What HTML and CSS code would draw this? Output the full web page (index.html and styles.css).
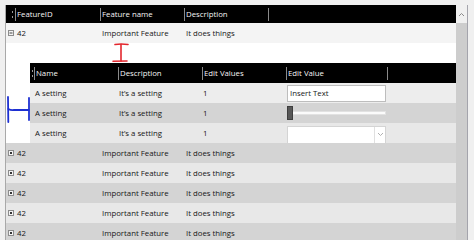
FILE: index.html
```html
<!DOCTYPE html>
<html>
<head>
<meta charset="utf-8">
<link rel="stylesheet" href="styles.css">
</head>
<body>
<div class="window">
  <div class="grid">
    <div class="main">
      <div class="hdr outer-cols">
        <div class="hc grip"><span class="dots"></span></div>
        <div class="hc"><span class="lbl">FeatureID</span></div>
        <div class="hc"><span class="lbl">Feature name</span></div>
        <div class="hc"><span class="lbl">Description</span></div>
        <div class="hc"><span class="lbl"></span></div>
      </div>
      <div class="row outer-cols top">
        <div class="c exp"><svg width="6" height="6" viewBox="0 0 6 6"><rect x="0.5" y="0.5" width="5" height="5" fill="#f4f4f4" stroke="#8c8c8c"/><line x1="1.5" y1="3" x2="4.5" y2="3" stroke="#444"/></svg></div>
        <div class="c">42</div>
        <div class="c">Important Feature</div>
        <div class="c">It does things</div>
        <div class="c"></div>
      </div>
      <div class="detail">
        <div class="nested">
          <div class="hdr nested-cols">
            <div class="hc grip n"><span class="dots"></span></div>
            <div class="hc"><span class="lbl">Name</span></div>
            <div class="hc"><span class="lbl">Description</span></div>
            <div class="hc"><span class="lbl">Edit Values</span></div>
            <div class="hc"><span class="lbl">Edit Value</span></div>
            <div class="hc"><span class="lbl"></span></div>
          </div>
          <div class="row nested-cols light1">
            <div class="c"></div>
            <div class="c">A setting</div>
            <div class="c">It’s a setting</div>
            <div class="c">1</div>
            <div class="c ctl"><div class="textbox">Insert Text</div></div>
            <div class="c"></div>
          </div>
          <div class="row nested-cols dark">
            <div class="c"></div>
            <div class="c">A setting</div>
            <div class="c">It’s a setting</div>
            <div class="c">1</div>
            <div class="c ctl"><div class="slider"><span class="thumb"></span><span class="track"></span></div></div>
            <div class="c"></div>
          </div>
          <div class="row nested-cols light">
            <div class="c"></div>
            <div class="c">A setting</div>
            <div class="c">It’s a setting</div>
            <div class="c">1</div>
            <div class="c ctl"><div class="combo"><span class="combo-field"></span><span class="combo-btn"><svg width="7" height="5" viewBox="0 0 7 5"><polyline points="1,1 3.5,3.5 6,1" fill="none" stroke="#b0b0b0" stroke-width="1"/></svg></span></div></div>
            <div class="c"></div>
          </div>
        </div>
      </div>
      <div class="row outer-cols dark">
        <div class="c exp"><svg width="6" height="6" viewBox="0 0 6 6"><rect x="0.5" y="0.5" width="5" height="5" fill="#f4f4f4" stroke="#8c8c8c"/><rect x="2" y="2" width="2" height="2" fill="#333"/></svg></div>
        <div class="c">42</div>
        <div class="c">Important Feature</div>
        <div class="c">It does things</div>
        <div class="c"></div>
      </div>
      <div class="row outer-cols light">
        <div class="c exp"><svg width="6" height="6" viewBox="0 0 6 6"><rect x="0.5" y="0.5" width="5" height="5" fill="#f4f4f4" stroke="#8c8c8c"/><rect x="2" y="2" width="2" height="2" fill="#333"/></svg></div>
        <div class="c">42</div>
        <div class="c">Important Feature</div>
        <div class="c">It does things</div>
        <div class="c"></div>
      </div>
      <div class="row outer-cols dark">
        <div class="c exp"><svg width="6" height="6" viewBox="0 0 6 6"><rect x="0.5" y="0.5" width="5" height="5" fill="#f4f4f4" stroke="#8c8c8c"/><rect x="2" y="2" width="2" height="2" fill="#333"/></svg></div>
        <div class="c">42</div>
        <div class="c">Important Feature</div>
        <div class="c">It does things</div>
        <div class="c"></div>
      </div>
      <div class="row outer-cols light">
        <div class="c exp"><svg width="6" height="6" viewBox="0 0 6 6"><rect x="0.5" y="0.5" width="5" height="5" fill="#f4f4f4" stroke="#8c8c8c"/><rect x="2" y="2" width="2" height="2" fill="#333"/></svg></div>
        <div class="c">42</div>
        <div class="c">Important Feature</div>
        <div class="c">It does things</div>
        <div class="c"></div>
      </div>
      <div class="row outer-cols dark">
        <div class="c exp"><svg width="6" height="6" viewBox="0 0 6 6"><rect x="0.5" y="0.5" width="5" height="5" fill="#f4f4f4" stroke="#8c8c8c"/><rect x="2" y="2" width="2" height="2" fill="#333"/></svg></div>
        <div class="c">42</div>
        <div class="c">Important Feature</div>
        <div class="c">It does things</div>
        <div class="c"></div>
      </div>
    </div>
    <div class="scroll">
      <div class="sb-up"><svg width="7" height="5" viewBox="0 0 7 5"><polyline points="1,4 3.5,1.5 6,4" fill="none" stroke="#8a8a8a" stroke-width="1"/></svg></div>
      <div class="sb-thumb"></div>
    </div>
  </div>
  <svg class="annot" width="474" height="220" viewBox="0 0 474 220">
    <g fill="none" stroke="#e3262d" stroke-width="1.6" stroke-linecap="round">
      <path d="M115 44.5 Q121 43.5 128 44.5"/>
      <path d="M121 44.5 L121 61"/>
      <path d="M113 61.2 L127 61"/>
    </g>
    <g fill="none" stroke="#1d30d2" stroke-width="1.8" stroke-linecap="round">
      <path d="M8 97 L8.3 122"/>
      <path d="M8.3 109 Q11 110.5 14 110 L29 110"/>
      <path d="M29 98 L29 120"/>
    </g>
  </svg>
</div>
</body>
</html>
```

FILE: styles.css
```css
* { box-sizing: border-box; }
html, body { margin: 0; padding: 0; }
html { background: #f0f0f0; }
body {
  background: #f0f0f0;
  font-family: "Open Sans", "Noto Sans", sans-serif;
  font-size: 7.8px;
  color: #161616;
  width: 474px;
  min-height: 220px;
  height: 100vh;
  overflow: hidden;
}
.window {
  position: relative;
  width: 474px;
  height: 100%;
  padding: 5px 6px 0 5px;
}
.grid {
  display: flex;
  height: 100%;
  border-left: 1px solid #a9a9a9;
  border-right: 1px solid #a4a4ac;
  overflow: hidden;
}
.main {
  flex: 1;
  min-width: 0;
  background: #ffffff;
}
.outer-cols {
  display: grid;
  grid-template-columns: 9px 85px 84px 84px 1fr;
}
.nested-cols {
  display: grid;
  grid-template-columns: 4px 84px 84px 84px 101px 1fr;
}
.hdr {
  background: #000;
  height: 18px;
  color: #f5f5f5;
}
.nested .hdr { height: 20px; }
.hc {
  display: flex;
  align-items: center;
  min-width: 0;
}
.hc .lbl {
  display: block;
  border-left: 1px solid #8a8a8a;
  height: 13px;
  line-height: 13px;
  padding-left: 1px;
  white-space: nowrap;
  width: 100%;
}
.grip { justify-content: flex-end; padding-right: 2px; }
.grip.n { padding-right: 1px; }
.dots {
  display: block;
  width: 1px;
  height: 7px;
  background: repeating-linear-gradient(#9a9a9a 0 2px, transparent 2px 5px);
}
.row {
  height: 20px;
  align-items: center;
}
.row .c {
  padding-left: 2px;
  white-space: nowrap;
  min-width: 0;
  line-height: 20px;
  height: 20px;
}
.row .exp {
  padding-left: 2px;
  display: flex;
  align-items: center;
}
.exp svg { display: block; }
.top { background: #f4f4f4; }
.light { background: #e8e8e8; }
.light1 { background: #ededed; }
.dark { background: #d4d4d4; }
.detail {
  background: #ffffff;
  padding: 20px 0 0 24px;
}
.nested .row .c { padding-left: 1px; }
.nested .row .c.ctl {
  padding-left: 1px;
  display: flex;
  align-items: center;
}
.textbox {
  width: 99px;
  height: 17px;
  margin-top: 1px;
  background: #fff;
  border: 1px solid #bdbdbd;
  line-height: 15px;
  padding-left: 2px;
}
.slider {
  display: flex;
  align-items: center;
  width: 99px;
  height: 14px;
}
.thumb {
  display: block;
  width: 6px;
  height: 14px;
  background: #575757;
  border: 1px solid #3e3e3e;
}
.track {
  display: block;
  flex: 1;
  height: 4px;
  background: #fbfbfb;
  border: 1px solid #e2e2e2;
  border-left: none;
}
.combo {
  display: flex;
  width: 99px;
  height: 18px;
  margin-top: 3px;
  background: #fff;
  border: 1px solid #d4d4d4;
}
.combo-field { flex: 1; }
.combo-btn {
  width: 11px;
  border-left: 1px solid #e0e0e0;
  display: flex;
  align-items: center;
  justify-content: center;
}
.combo-btn svg { display: block; }
.scroll {
  width: 11px;
  display: flex;
  flex-direction: column;
  background: #cdcdcd;
}
.sb-up {
  height: 18px;
  background: #f0f0f0;
  display: flex;
  align-items: center;
  justify-content: center;
}
.sb-up svg { display: block; }
.sb-thumb { flex: 1; background: #cdcdcd; }
.annot {
  position: absolute;
  left: 0;
  top: 0;
  pointer-events: none;
}
```
